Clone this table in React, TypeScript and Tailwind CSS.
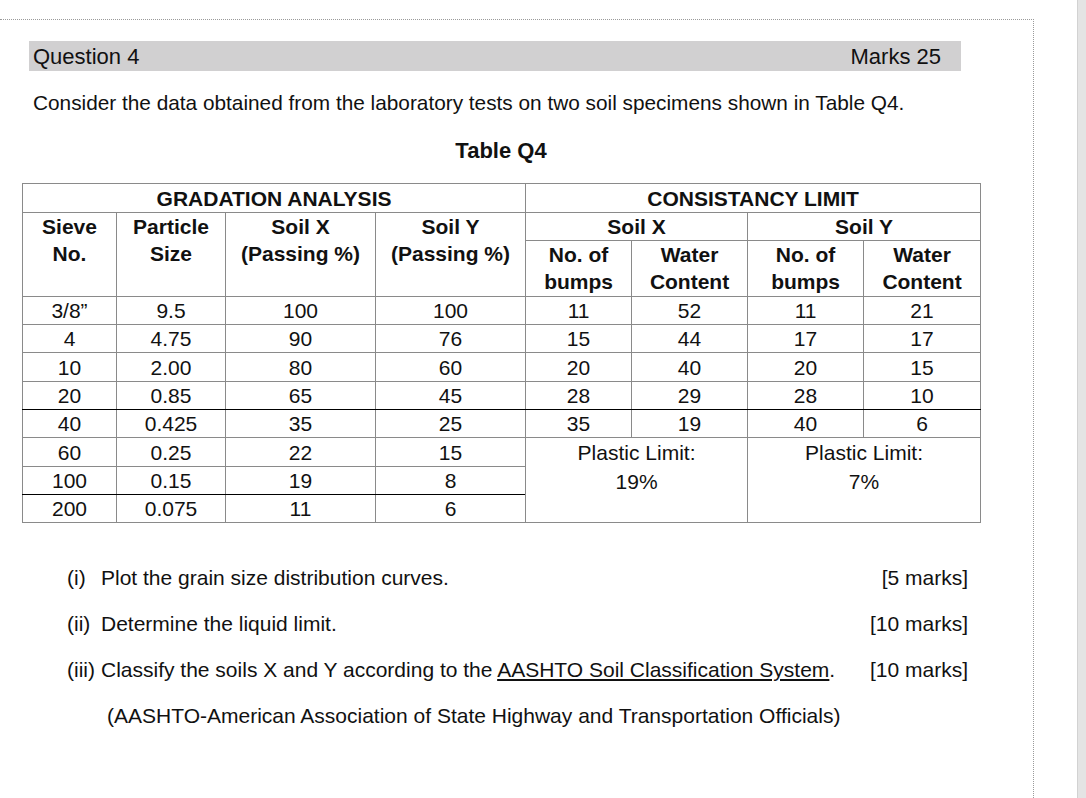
const font = { fontFamily: '"Liberation Sans", Arial, sans-serif' };

const gradation = [
  ["3/8\u201D", "9.5", "100", "100"],
  ["4", "4.75", "90", "76"],
  ["10", "2.00", "80", "60"],
  ["20", "0.85", "65", "45"],
  ["40", "0.425", "35", "25"],
  ["60", "0.25", "22", "15"],
  ["100", "0.15", "19", "8"],
  ["200", "0.075", "11", "6"],
];

const consistency = [
  ["11", "52", "11", "21"],
  ["15", "44", "17", "17"],
  ["20", "40", "20", "15"],
  ["28", "29", "28", "10"],
  ["35", "19", "40", "6"],
];

const rowHeights = ["h-[28px]", "h-[28px]", "h-[29px]", "h-[28px]", "h-[28px]", "h-[29px]", "h-[28px]", "h-[28px]"];

const cell = "border border-[#8a8a8a] text-center align-middle p-0";
const head = "border border-[#8a8a8a] text-center font-bold p-0";

const SoilTable = () => {
  return (
    <table className="table-fixed border-collapse w-[958px] ml-[22px] text-[21px] leading-[23px] text-[#111]">
      <colgroup>
        <col className="w-[94px]" />
        <col className="w-[109px]" />
        <col className="w-[150px]" />
        <col className="w-[150px]" />
        <col className="w-[106px]" />
        <col className="w-[116px]" />
        <col className="w-[116px]" />
        <col className="w-[117px]" />
      </colgroup>
      <thead>
        <tr className="h-[29px]">
          <th colSpan={4} className={head}>GRADATION ANALYSIS</th>
          <th colSpan={4} className={head}>CONSISTANCY LIMIT</th>
        </tr>
        <tr className="h-[28px]">
          <th rowSpan={2} className={head + " align-top leading-[27px]"}>
            Sieve
            <br />
            No.
          </th>
          <th rowSpan={2} className={head + " align-top leading-[27px]"}>
            Particle
            <br />
            Size
          </th>
          <th rowSpan={2} className={head + " align-top leading-[27px]"}>
            Soil X
            <br />
            (Passing %)
          </th>
          <th rowSpan={2} className={head + " align-top leading-[27px]"}>
            Soil Y
            <br />
            (Passing %)
          </th>
          <th colSpan={2} className={head}>Soil X</th>
          <th colSpan={2} className={head}>Soil Y</th>
        </tr>
        <tr className="h-[56px]">
          <th className={head + " align-top leading-[27px]"}>
            No. of
            <br />
            bumps
          </th>
          <th className={head + " align-top leading-[27px]"}>
            Water
            <br />
            Content
          </th>
          <th className={head + " align-top leading-[27px]"}>
            No. of
            <br />
            bumps
          </th>
          <th className={head + " align-top leading-[27px]"}>
            Water
            <br />
            Content
          </th>
        </tr>
      </thead>
      <tbody>
        {gradation.map((row, i) => (
          <tr
            key={i}
            className={
              rowHeights[i] +
              (i === 3 ? " [&>td]:border-b-black" : "") +
              (i === 6 ? " [&>td]:border-b-black" : "")
            }
          >
            {row.map((v, j) => (
              <td key={j} className={cell}>
                {v}
              </td>
            ))}
            {i < 5 &&
              consistency[i].map((v, j) => (
                <td key={"c" + j} className={cell}>
                  {v}
                </td>
              ))}
            {i === 5 && (
              <>
                <td rowSpan={3} colSpan={2} className={cell + " align-top leading-[29px]"}>
                  Plastic Limit:
                  <br />
                  19%
                </td>
                <td rowSpan={3} colSpan={2} className={cell + " align-top leading-[29px]"}>
                  Plastic Limit:
                  <br />
                  7%
                </td>
              </>
            )}
          </tr>
        ))}
      </tbody>
    </table>
  );
};

const Part = ({ label, text, marks }: { label: string; text: React.ReactNode; marks: string }) => {
  return (
    <div className="flex justify-between ml-[67px] w-[901px]">
      <div className="flex">
        <span className="w-[34px]">{label}</span>
        <span>{text}</span>
      </div>
      <span>{marks}</span>
    </div>
  );
};

export default function App() {
  return (
    <div className="flex w-[1086px] h-[798px] bg-white overflow-hidden text-[#111]" style={font}>
      <div className="w-[1077px] shrink-0">
        <div className="mt-[19px] w-[1034px] h-[779px] border-t border-r border-dotted border-[#9a9a9a]">
          <div className="ml-[29px] mt-[21px] w-[932px] h-[30px] bg-[#d1d0d1] flex items-center justify-between px-[4px] text-[22px]">
            <span>Question 4</span>
            <span className="mr-[16px]">Marks 25</span>
          </div>
          <p className="ml-[33px] mt-[21px] text-[20.8px] leading-[22px]">
            Consider the data obtained from the laboratory tests on two soil specimens shown in Table Q4.
          </p>
          <p className="mt-[25px] w-[1002px] text-center font-bold text-[22px] leading-[23px]">Table Q4</p>
          <div className="mt-[21px]">
            <SoilTable />
          </div>
          <div className="mt-[43px] flex flex-col gap-[23px] text-[21px] leading-[23px]">
            <Part label="(i)" text="Plot the grain size distribution curves." marks="[5 marks]" />
            <Part label="(ii)" text="Determine the liquid limit." marks="[10 marks]" />
            <Part
              label="(iii)"
              text={
                <>
                  Classify the soils X and Y according to the{" "}
                  <span className="underline underline-offset-2">AASHTO Soil Classification System</span>.
                </>
              }
              marks="[10 marks]"
            />
            <p className="ml-[107px]">(AASHTO-American Association of State Highway and Transportation Officials)</p>
          </div>
        </div>
      </div>
      <div className="flex-1 bg-[#e4e4e4] border-l border-[#d2d2d2]" />
    </div>
  );
}
